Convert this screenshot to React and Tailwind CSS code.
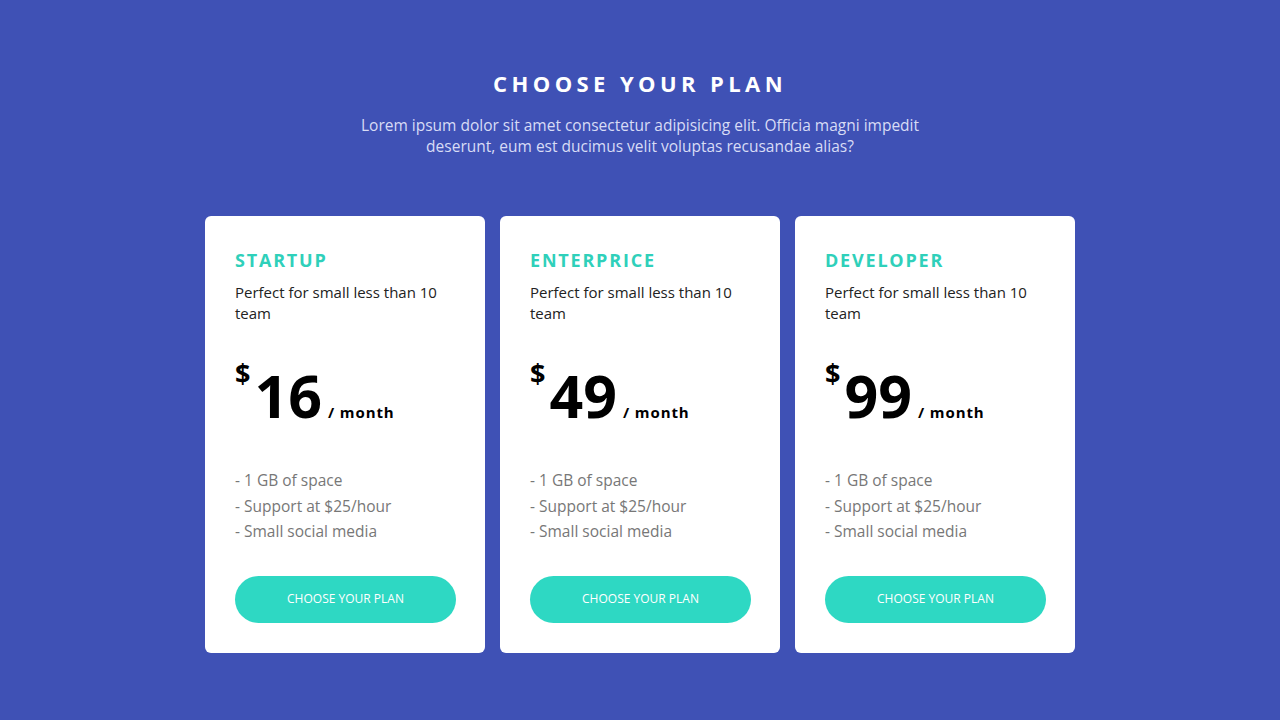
import React from 'react';

const plans = [
  { name: 'STARTUP', price: '16' },
  { name: 'ENTERPRICE', price: '49' },
  { name: 'DEVELOPER', price: '99' },
];

const features = ['- 1 GB of space', '- Support at $25/hour', '- Small social media'];

const PlanCard = ({ plan }) => (
  <div className="w-[280px] h-[437px] bg-white rounded-md px-[30px] pt-[33px] flex flex-col">
    <h3 className="text-[18px] font-bold tracking-[0.1em] text-[#2fd0ba] leading-[22px]">{plan.name}</h3>
    <p className="mt-[11px] text-[15px] leading-[21px] text-[#222] pr-4">Perfect for small less than 10 team</p>
    <div className="mt-[33px] flex items-start h-[70px]">
      <span className="text-[27px] font-bold leading-none text-black mt-[2px]">$</span>
      <span className="text-[59px] font-bold leading-none text-black ml-[4px] mt-[9px]">{plan.price}</span>
      <span className="self-end text-[15px] font-bold tracking-[0.06em] text-black ml-[6px] mb-[4px]">/ month</span>
    </div>
    <ul className="mt-[43px] space-y-[4px] text-[15.5px] leading-[21.5px] text-[#777]">
      {features.map((f) => (
        <li key={f}>{f}</li>
      ))}
    </ul>
    <button className="mt-[33px] w-[221px] h-[47px] rounded-full bg-[#2ed8c3] text-white text-[12px] font-medium">
      CHOOSE YOUR PLAN
    </button>
  </div>
);

export default function App() {
  return (
    <div className="min-h-[720px] w-full bg-[#3f51b5] flex flex-col items-center pt-[69px]" style={{ fontFamily: '"Open Sans", "Liberation Sans", sans-serif' }}>
      <h1 className="text-[22px] font-bold tracking-[0.2em] text-white leading-[28px]">CHOOSE YOUR PLAN</h1>
      <p className="mt-[18px] w-[575px] text-center text-[15.5px] leading-[21px] text-[#d8dcf5]">
        Lorem ipsum dolor sit amet consectetur adipisicing elit. Officia magni impedit deserunt, eum est ducimus velit voluptas recusandae alias?
      </p>
      <div className="mt-[59px] flex gap-[15px]">
        {plans.map((p) => (
          <PlanCard key={p.name} plan={p} />
        ))}
      </div>
    </div>
  );
}
